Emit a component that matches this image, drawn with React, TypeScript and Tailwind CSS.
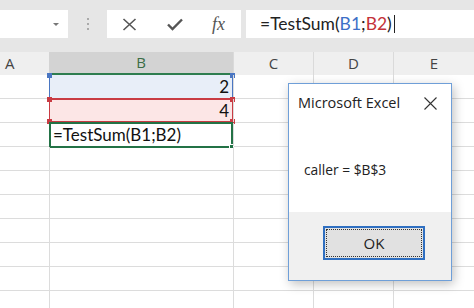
import React from "react";

const COLS = [
  { key: "A", w: "w-[49px]" },
  { key: "B", w: "w-[184px]" },
  { key: "C", w: "w-[80px]" },
  { key: "D", w: "w-[80px]" },
  { key: "E", w: "w-[81px]" },
];

function Handle({ className }: { className: string }) {
  return <span className={`absolute w-[5px] h-[5px] ${className}`} />;
}

export default function App() {
  return (
    <div className="relative w-[474px] h-[308px] overflow-hidden bg-white font-['Open_Sans',sans-serif]">
      {/* Formula bar */}
      <div className="flex items-stretch h-[52px] bg-[#e6e6e6] pt-[10px] pb-[14px]">
        <div className="w-[68px] bg-white flex items-center justify-end pr-[9px]">
          <span className="w-0 h-0 border-l-[3px] border-r-[3px] border-t-[3px] border-l-transparent border-r-transparent border-t-[#777]" />
        </div>
        <div className="w-[39px] flex flex-col items-center justify-center gap-[3px]">
          <span className="w-[2px] h-[2px] bg-[#aaa]" />
          <span className="w-[2px] h-[2px] bg-[#aaa]" />
          <span className="w-[2px] h-[2px] bg-[#aaa]" />
        </div>
        <div className="w-[134px] bg-white flex items-center">
          <svg className="ml-[15px]" width="15" height="13" viewBox="0 0 15 13">
            <path d="M1.5 1 L13.5 12 M13.5 1 L1.5 12" stroke="#555" strokeWidth="1.6" fill="none" />
          </svg>
          <svg className="ml-[30px]" width="16" height="13" viewBox="0 0 16 13">
            <path d="M1 6.5 L5.5 11 L15 1.5" stroke="#555" strokeWidth="2.4" fill="none" />
          </svg>
          <span className="ml-[29px] text-[18px] italic text-[#555] font-['Liberation_Serif',serif] leading-none">
            fx
          </span>
        </div>
        <div className="w-[5px]" />
        <div className="flex-1 bg-white flex items-center pl-[14px] text-[17.5px] text-[#222] font-['Lato',sans-serif]">
          <span>=TestSum(</span>
          <span className="text-[#3d6fc7]">B1</span>
          <span>;</span>
          <span className="text-[#c4323a]">B2</span>
          <span>)</span>
          <span className="ml-[2px] w-[1px] h-[18px] bg-[#222]" />
        </div>
      </div>

      {/* Column headers */}
      <div className="flex h-[23px] bg-[#efefef] text-[15px] text-[#444]">
        {COLS.map((c) =>
          c.key === "B" ? (
            <div
              key={c.key}
              className={`${c.w} flex items-center justify-center bg-[#d3d3d3] border-b-2 border-[#2e7d4f] text-[#3b6d45]`}
            >
              B
            </div>
          ) : (
            <div
              key={c.key}
              className={`${c.w} flex items-center ${c.key === "A" ? "pl-[5px]" : "justify-center border-l border-[#dadada]"}`}
            >
              {c.key}
            </div>
          )
        )}
      </div>

      {/* Grid */}
      <div className="flex flex-col font-['Lato',sans-serif] text-[17px] text-[#111]">
        {Array.from({ length: 10 }).map((_, r) => (
          <div key={r} className="flex h-[24px] border-b border-[#dcdcdc]">
            {COLS.map((c, ci) => {
              let cls = `${c.w} relative ${ci > 0 ? "border-l border-[#dcdcdc]" : ""}`;
              let content: React.ReactNode = null;
              if (ci === 1 && r === 0) {
                cls = `${c.w} relative bg-[#e8eef8] border-l border-r border-[#4a76c2] flex items-center justify-end pr-[3px]`;
                content = (
                  <>
                    2
                    <Handle className="-left-[3px] -top-[2px] bg-[#4a76c2]" />
                    <Handle className="-right-[3px] -top-[2px] bg-[#4a76c2]" />
                  </>
                );
              }
              if (ci === 1 && r === 1) {
                cls = `${c.w} relative bg-[#fce6e6] border-l border-r border-t-2 border-b-2 -mt-[1px] h-[25px] border-[#c93b43] flex items-center justify-end pr-[3px]`;
                content = (
                  <>
                    4
                    <Handle className="-left-[3px] -top-[3px] bg-[#c93b43]" />
                    <Handle className="-right-[3px] -top-[3px] bg-[#c93b43]" />
                    <Handle className="-left-[3px] -bottom-[3px] bg-[#c93b43]" />
                    <Handle className="-right-[3px] -bottom-[3px] bg-[#c93b43]" />
                  </>
                );
              }
              if (ci === 1 && r === 2) {
                cls = `${c.w} relative border-2 border-[#237246] h-[26px] -mt-[1px] flex items-center pl-[2px]`;
                content = (
                  <>
                    =TestSum(B1;B2)
                    <Handle className="-right-[3px] -bottom-[3px] bg-[#237246] border border-white" />
                  </>
                );
              }
              return (
                <div key={c.key} className={cls}>
                  {content}
                </div>
              );
            })}
          </div>
        ))}
      </div>

      {/* Message box */}
      <div className="absolute left-[288px] top-[83px] w-[164px] h-[198px] flex flex-col bg-white border border-[#6f9fd8] shadow-[2px_3px_10px_rgba(0,0,0,0.25)] text-[#222]">
        <div className="flex items-center justify-between h-[38px] pl-[9px] pr-[14px] text-[14.5px]">
          <span>Microsoft Excel</span>
          <svg width="13" height="13" viewBox="0 0 13 13">
            <path d="M0.5 0.5 L12.5 12.5 M12.5 0.5 L0.5 12.5" stroke="#333" strokeWidth="1.1" fill="none" />
          </svg>
        </div>
        <div className="flex-1 flex items-center pl-[15px] text-[13.8px] pt-[6px]">caller = $B$3</div>
        <div className="h-[68px] bg-[#f0f0f0] flex items-start pt-[14px] pl-[34px]">
          <div className="w-[102px] h-[34px] bg-[#e1e1e1] border-2 border-[#2f6fc1] flex items-center justify-center p-[1px]">
            <div className="w-full h-full border border-dotted border-[#333] flex items-center justify-center text-[15px]">
              OK
            </div>
          </div>
        </div>
      </div>
    </div>
  );
}
